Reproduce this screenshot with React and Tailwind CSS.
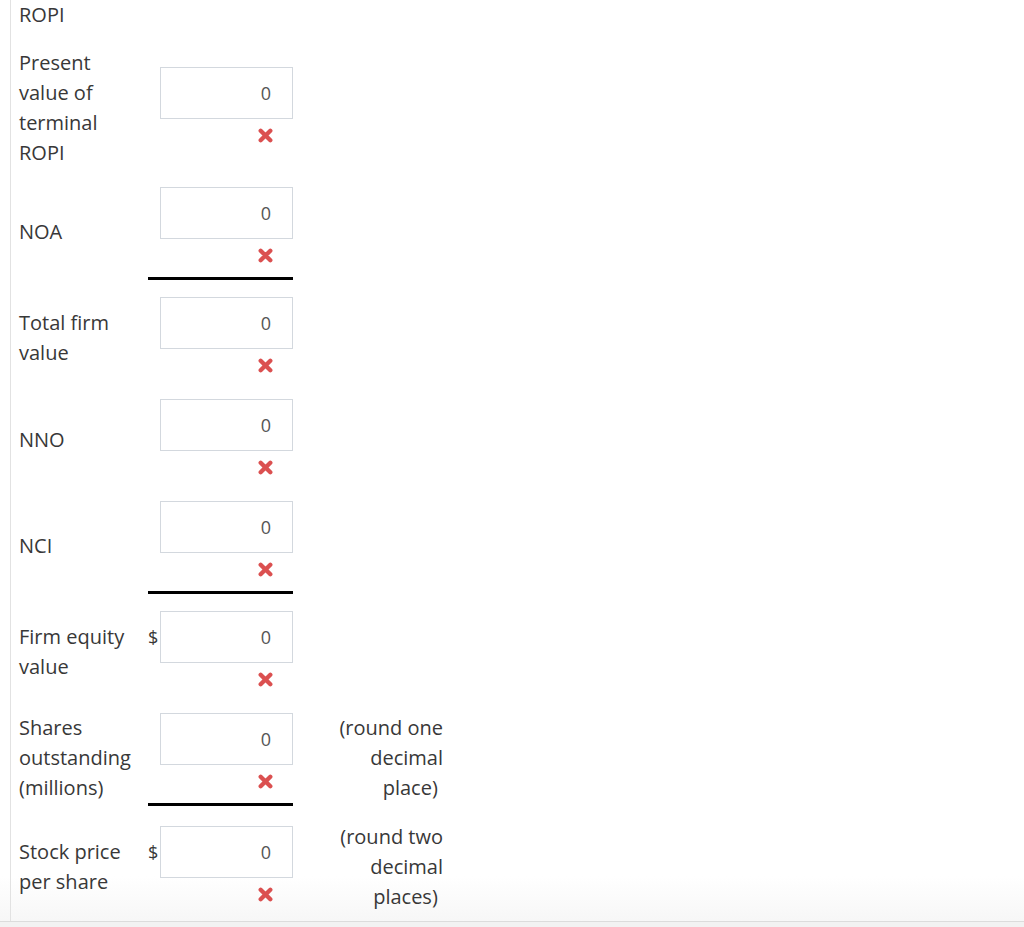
import React from "react";

const rows = [
  { label: "Present value of terminal ROPI" },
  { label: "NOA", line: true },
  { label: "Total firm value" },
  { label: "NNO" },
  { label: "NCI", line: true },
  { label: "Firm equity value", dollar: true },
  { label: "Shares outstanding (millions)", line: true, note: "(round one decimal place)\u00a0" },
  { label: "Stock price per share", dollar: true, note: "(round two decimal places)\u00a0" },
];

// bold red cross shown under each wrong answer
const Cross = () => (
  <svg viewBox="0 0 14 14" className="w-[15px] h-[15px]">
    <path d="M2.5 2.5 L11.5 11.5 M11.5 2.5 L2.5 11.5" stroke="#db5050" strokeWidth="4" strokeLinecap="round" fill="none" />
  </svg>
);

const Row = ({ label, line, dollar, note }) => (
  <div className="flex items-center">
    {/* label cell */}
    <div className="w-[129px] pr-[9px] py-[9px] shrink-0">{label}</div>

    {/* input cell */}
    <div className="w-[145px] shrink-0 pt-[10px]">
      <div className="flex items-center">
        <span className="w-[12px] text-[18px] leading-none">{dollar ? "$" : ""}</span>
        <div className="w-[133px] h-[52px] border border-[#d3d8de] bg-white flex items-center justify-end pr-[21px] text-[18px] text-[#555]">
          0
        </div>
      </div>
      <div className="h-[30px] pt-[9px] flex justify-end pr-[20px]">
        <Cross />
      </div>
      {line ? (
        <div className="mt-[8px] mb-[7px] h-[3px] bg-black" />
      ) : (
        <div className="h-[10px]" />
      )}
    </div>

    {/* note cell */}
    {note && (
      <div className="w-[150px] shrink-0 py-[9px] flex justify-end">
        <div className="w-[112px] text-right">{note}</div>
      </div>
    )}
  </div>
);

export default function App() {
  return (
    <div className="w-[1024px] h-[927px] bg-[#f2f2f2] overflow-hidden">
      <div
        className="h-[922px] pl-[10px] bg-[linear-gradient(to_bottom,#ffffff_calc(100%-45px),#f7f7f7)] border-b border-[#dcdcdc]"
        style={{ fontFamily: '"Open Sans", "Liberation Sans", sans-serif' }}
      >
        <div className="h-full border-l border-[#e2e2e2] pl-[8px] text-[20px] leading-[30px] text-[#383838]">
          <div className="h-[39px]">ROPI</div>
          {rows.map((r) => (
            <Row key={r.label} {...r} />
          ))}
        </div>
      </div>
    </div>
  );
}
